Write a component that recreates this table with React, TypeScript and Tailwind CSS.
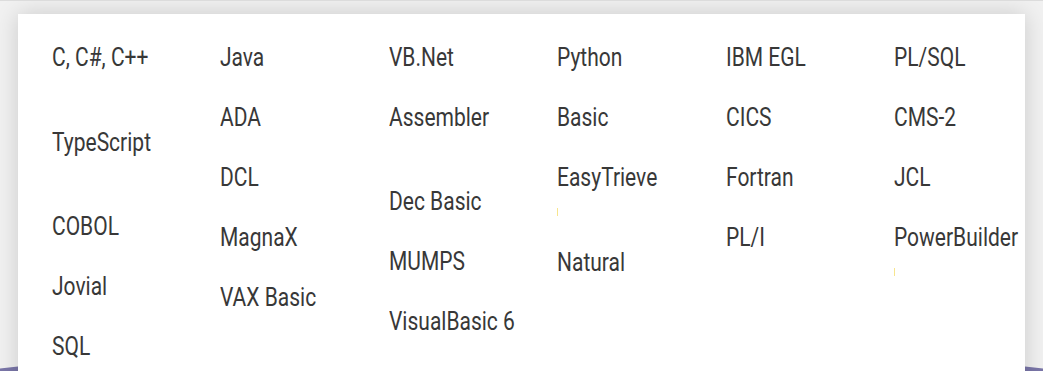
type Item = { label: string; extra?: number; mark?: boolean }

const columns: Item[][] = [
  [{ label: "C, C#, C++" }, { label: "TypeScript", extra: 25 }, { label: "COBOL", extra: 24 }, { label: "Jovial" }, { label: "SQL" }],
  [{ label: "Java" }, { label: "ADA" }, { label: "DCL" }, { label: "MagnaX" }, { label: "VAX Basic" }],
  [{ label: "VB.Net" }, { label: "Assembler" }, { label: "Dec Basic", extra: 24 }, { label: "MUMPS" }, { label: "VisualBasic 6" }],
  [{ label: "Python" }, { label: "Basic" }, { label: "EasyTrieve", mark: true }, { label: "Natural", extra: 25 }],
  [{ label: "IBM EGL" }, { label: "CICS" }, { label: "Fortran" }, { label: "PL/I" }],
  [{ label: "PL/SQL" }, { label: "CMS-2" }, { label: "JCL" }, { label: "PowerBuilder", mark: true }],
]

export default function App() {
  return (
    <div className="relative h-[371px] w-[1043px] overflow-hidden bg-[#f1f1f1] border-t border-[#dcdcdc]">
      <div className="absolute bottom-0 left-0 right-0 h-[6px] bg-[#7a76a8] [clip-path:polygon(0_60%,3%_0,97%_0,100%_60%,100%_100%,0_100%)]" />
      <div className="relative ml-[18px] mt-[13px] h-[420px] w-[1007px] bg-white pt-[32px] pl-[34px] shadow-[0_0_22px_rgba(0,0,0,0.16)]">
        <div className="grid grid-cols-[repeat(6,168.4px)] font-['Roboto',sans-serif]">
          {columns.map((col, i) => (
            <div key={i} className="flex flex-col">
              {col.map((it) => (
                <div key={it.label} style={{ marginTop: it.extra ?? 0 }} className="relative mb-[36px] h-[24px]">
                  <p className="inline-block origin-left scale-x-[0.84] whitespace-nowrap text-[25px] leading-[24px] text-[#383838]">{it.label}</p>
                  {it.mark && <span className="absolute left-0 top-[42px] h-[8px] w-px bg-[#f7e58e]" />}
                </div>
              ))}
            </div>
          ))}
        </div>
      </div>
    </div>
  )
}
